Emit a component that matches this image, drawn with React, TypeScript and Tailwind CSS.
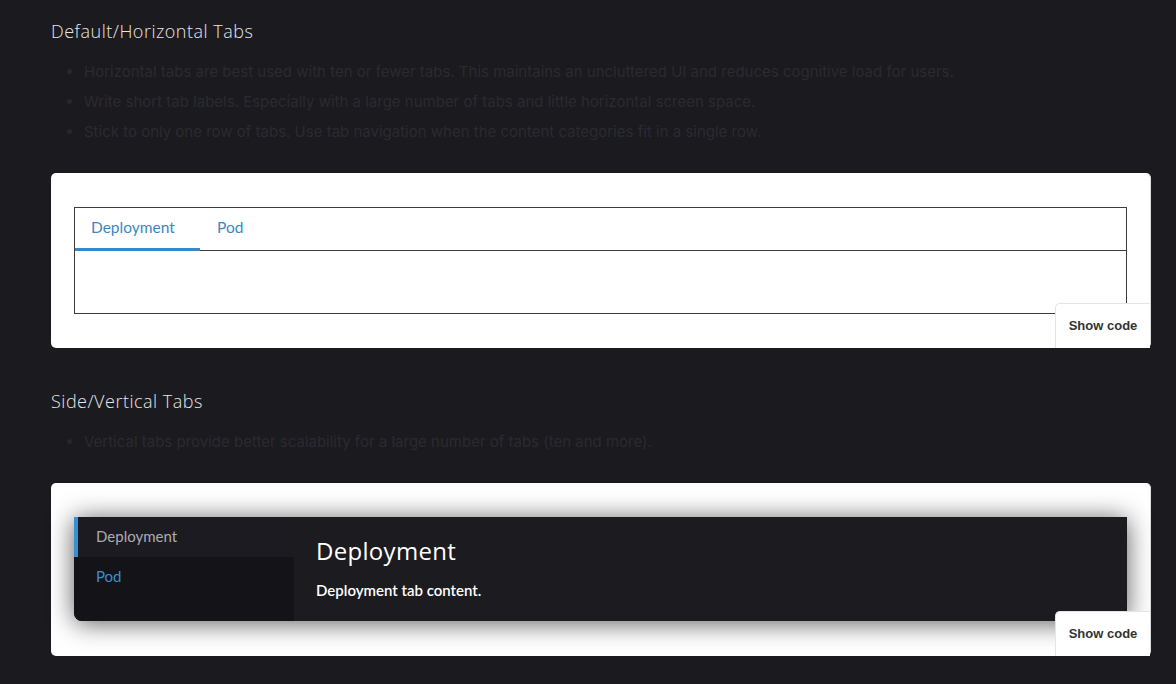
import React, { useState } from 'react';

// Tabs demo page: horizontal + vertical variants
const tabs = ['Deployment', 'Pod'];

const horizontalNotes = [
  'Horizontal tabs are best used with ten or fewer tabs. This maintains an uncluttered UI and reduces cognitive load for users.',
  'Write short tab labels. Especially with a large number of tabs and little horizontal screen space.',
  'Stick to only one row of tabs. Use tab navigation when the content categories fit in a single row.',
];

const verticalNotes = [
  'Vertical tabs provide better scalability for a large number of tabs (ten and more).',
];

const Heading = ({ children }: { children: React.ReactNode }) => (
  <h2 className="font-['Open_Sans',sans-serif] font-light text-[18px] leading-[27px] text-[#e6e6e8] tracking-[0.5px]">
    {children}
  </h2>
);

const Notes = ({ items }: { items: string[] }) => (
  <ul className="mt-[12px] pl-[33px] list-disc marker:text-[#28272c] font-['Inter',sans-serif] text-[15px] leading-[30px] text-[#2b2a30]">
    {items.map((t) => (
      <li key={t}>{t}</li>
    ))}
  </ul>
);

const ShowCode = () => (
  <button className="absolute right-0 bottom-0 w-[95px] h-[45px] bg-white border-t border-l border-[#e4e4e4] rounded-tl-[5px] font-['Liberation_Sans',sans-serif] font-bold text-[13px] text-[#333333]">
    Show code
  </button>
);

const HorizontalTabs = () => {
  const [active, setActive] = useState(0);
  return (
    <div className="border border-[#3c3c3c] h-[107px] flex flex-col">
      <div className="flex h-[43px] border-b border-[#3c3c3c]">
        {tabs.map((t, i) => (
          <button
            key={t}
            onClick={() => setActive(i)}
            className={
              i === active
                ? "h-[43px] -mb-px px-[16px] pb-[1px] w-[125px] text-left border-b-[3px] border-[#3a88c5] font-['Lato',sans-serif] text-[15.5px] text-[#3a88c5]"
                : "h-[43px] px-[17px] pb-[4px] text-left font-['Lato',sans-serif] text-[15.5px] text-[#3a88c5]"
            }
          >
            {t}
          </button>
        ))}
      </div>
      <div className="flex-1" />
    </div>
  );
};

const VerticalTabs = () => {
  const [active, setActive] = useState(0);
  return (
    <div className="flex h-[104px] rounded-b-[8px] overflow-hidden bg-[#1c1b20] shadow-[0_2px_26px_rgba(0,0,0,0.65)]">
      <div className="w-[220px] bg-[#141418] flex flex-col">
        {tabs.map((t, i) => (
          <button
            key={t}
            onClick={() => setActive(i)}
            className={
              i === active
                ? "h-[40px] pl-[18px] pb-[1px] text-left border-l-[4px] border-[#3a8fd0] bg-[#1c1b21] font-['Lato',sans-serif] text-[15px] text-[#acacb1]"
                : "h-[40px] pl-[22px] pb-[1px] text-left font-['Lato',sans-serif] text-[15px] text-[#3a8fd0]"
            }
          >
            {t}
          </button>
        ))}
      </div>
      <div className="flex-1 pl-[22px] pt-[18px]">
        <h3 className="font-['Open_Sans',sans-serif] text-[24px] leading-[32px] tracking-[0.3px] text-white">{tabs[active]}</h3>
        <p className="mt-[13px] font-['Lato',sans-serif] font-semibold text-[15px] leading-[20px] text-white">
          {tabs[active]} tab content.
        </p>
      </div>
    </div>
  );
};

export default function App() {
  return (
    <div className="min-h-[684px] bg-[#1b1a1f] pl-[51px] pr-[25px] pt-[18px] pb-[28px]">
      <Heading>Default/Horizontal Tabs</Heading>
      <Notes items={horizontalNotes} />
      <div className="relative mt-[26px] bg-white rounded-[5px] border-r border-[#dcdcdc] pt-[34px] pb-[34px] px-[23px]">
        <HorizontalTabs />
        <ShowCode />
      </div>

      <div className="mt-[40px]">
        <Heading>Side/Vertical Tabs</Heading>
      </div>
      <Notes items={verticalNotes} />
      <div className="relative mt-[26px] bg-white rounded-[5px] border-r border-[#dcdcdc] pt-[34px] pb-[35px] px-[23px]">
        <VerticalTabs />
        <ShowCode />
      </div>
    </div>
  );
}
